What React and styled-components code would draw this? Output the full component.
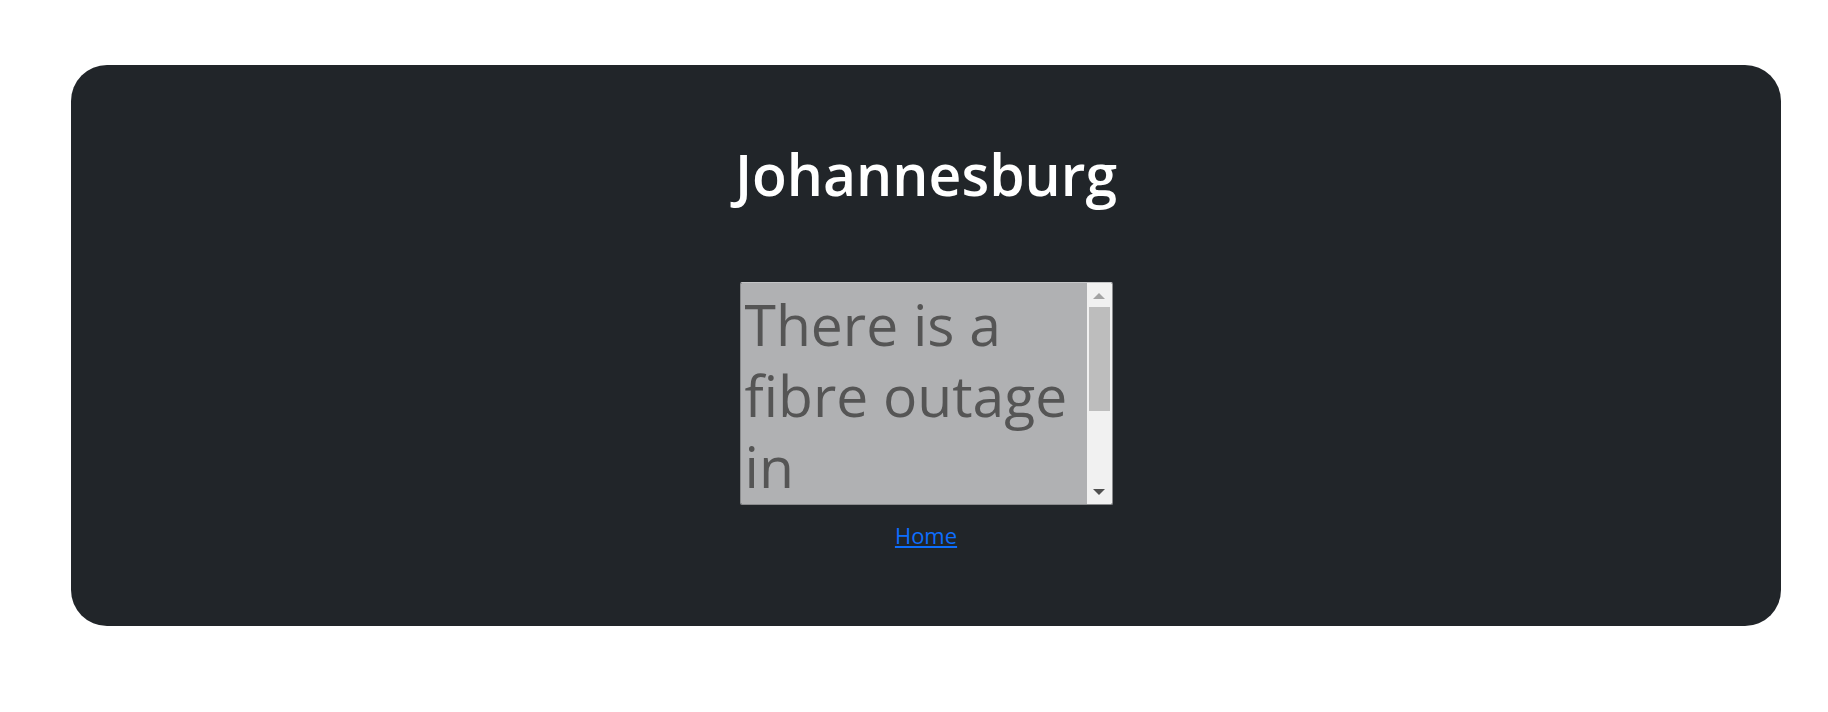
import React from 'react';
import styled, { createGlobalStyle } from 'styled-components';

const GlobalStyle = createGlobalStyle`
  html, body {
    margin: 0;
    padding: 0;
    background: #ffffff;
    font-family: "Open Sans", "Liberation Sans", sans-serif;
  }
`;

const Page = styled.main`
  padding: 65px 47px 86px 71px;
`;

const Card = styled.section`
  background-color: #212529;
  border-radius: 36px;
  height: 561px;
  box-sizing: border-box;
  padding-top: 61px;
  display: flex;
  flex-direction: column;
  align-items: center;
`;

const Title = styled.h1`
  margin: 0;
  color: #ffffff;
  font-size: 57px;
  font-weight: 600;
  line-height: 96px;
`;

const NoticeFrame = styled.div`
  margin-top: 60px;
  width: 373px;
  height: 223px;
  box-sizing: border-box;
  display: flex;
  border: 1px solid #8a8b8d;
  border-top-color: #c4c5c7;
  border-radius: 2px;
  overflow: hidden;
`;

const Notice = styled.textarea`
  flex: 1;
  min-width: 0;
  margin: 0;
  box-sizing: border-box;
  padding: 6px 4px 0;
  border: none;
  background-color: #b0b1b3;
  color: #555555;
  font-family: "Open Sans", "Liberation Sans", sans-serif;
  font-size: 57px;
  line-height: 71px;
  resize: none;
  overflow-y: scroll;
  outline: none;
  scrollbar-width: none;
`;

const ScrollBar = styled.div`
  width: 25px;
  flex: none;
  background: #f1f1f1;
  display: flex;
  flex-direction: column;
  align-items: center;
`;

const Arrow = styled.div`
  height: 24px;
  display: flex;
  align-items: center;
  justify-content: center;
`;

const Thumb = styled.div`
  width: 21px;
  height: 104px;
  background: #bdbdbd;
`;

const Track = styled.div`
  flex: 1;
`;

const HomeLink = styled.a`
  margin-top: 14px;
  color: #0d6efd;
  font-size: 22px;
  line-height: 32px;
  text-decoration: underline;
`;

function Triangle({ up, color }) {
  return (
    <svg width="12" height="7" viewBox="0 0 12 7">
      <path d={up ? 'M0 7L6 1L12 7Z' : 'M0 0L6 6L12 0Z'} fill={color} />
    </svg>
  );
}

export default function App() {
  return (
    <>
      <GlobalStyle />
      <Page>
        <Card>
          <Title>Johannesburg</Title>
          <NoticeFrame>
            <Notice
              readOnly
              defaultValue="There is a fibre outage in Johannesburg. Technicians are on site and service should be restored within a few hours."
            />
            <ScrollBar>
              <Arrow>
                <Triangle up color="#a3a3a3" />
              </Arrow>
              <Thumb />
              <Track />
              <Arrow>
                <Triangle color="#505050" />
              </Arrow>
            </ScrollBar>
          </NoticeFrame>
          <HomeLink href="#">Home</HomeLink>
        </Card>
      </Page>
    </>
  );
}
